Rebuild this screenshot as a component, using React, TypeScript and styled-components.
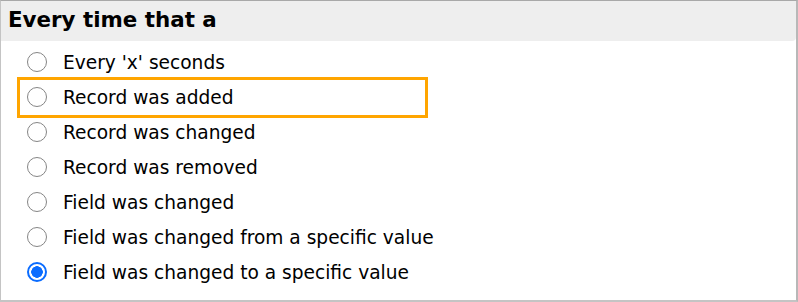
import React from 'react';
import styled, { createGlobalStyle } from 'styled-components';

const GlobalStyle = createGlobalStyle`
  html, body {
    margin: 0;
    padding: 0;
    background: #ffffff;
  }
`;

const options = [
  "Every 'x' seconds",
  'Record was added',
  'Record was changed',
  'Record was removed',
  'Field was changed',
  'Field was changed from a specific value',
  'Field was changed to a specific value',
];

export default function App() {
  const selected = 6;
  const highlighted = 1;

  return (
    <>
      <GlobalStyle />
      <Panel>
        <Header>Every time that a</Header>
        <List>
          {options.map((label, i) => (
            <Row key={label} highlighted={i === highlighted}>
              <Radio checked={i === selected} />
              <Label>{label}</Label>
            </Row>
          ))}
        </List>
      </Panel>
    </>
  );
}

const Panel = styled.div`
  width: 798px;
  height: 302px;
  box-sizing: border-box;
  border: 1px solid #c4c4c4;
  border-top-color: #a8a8a8;
  border-right: 2px solid #b8b8b8;
  border-bottom: 2px solid #c4c4c4;
  background: #ffffff;
  font-family: 'DejaVu Sans', Verdana, sans-serif;
  color: #000;
`;

const Header = styled.div`
  height: 40px;
  box-sizing: border-box;
  padding: 6px 0 0 7px;
  background: #eeeeee;
  font-size: 21.4px;
  font-weight: bold;
  border-bottom-right-radius: 4px;
`;

const List = styled.div`
  display: flex;
  flex-direction: column;
  padding: 3.5px 0 0 26px;
`;

const Row = styled.div<{ highlighted: boolean }>`
  display: flex;
  align-items: center;
  gap: 16px;
  height: 35px;
  width: 402px;
  box-sizing: border-box;
  outline: ${({ highlighted }) => (highlighted ? '3.5px solid #ffa500' : 'none')};
  ${({ highlighted }) =>
    highlighted &&
    `
    margin-left: -7px;
    padding-left: 7px;
    width: 405px;
  `}
`;

const Radio = styled.span<{ checked: boolean }>`
  width: 20px;
  height: 20px;
  box-sizing: border-box;
  border-radius: 50%;
  flex-shrink: 0;
  border: ${({ checked }) => (checked ? '2px solid #0a6cff' : '1.5px solid #858585')};
  background: ${({ checked }) =>
    checked ? 'radial-gradient(circle, #0a6cff 0 5.5px, #ffffff 6px)' : '#ffffff'};
`;

const Label = styled.span`
  font-size: 18.6px;
  white-space: nowrap;
`;
